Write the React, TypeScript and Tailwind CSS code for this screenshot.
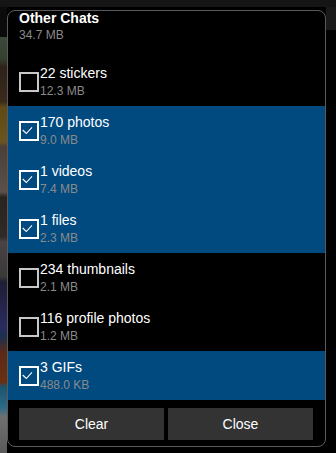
import { useState } from 'react'

type Item = { label: string; size: string; checked: boolean }

const initialItems: Item[] = [
  { label: '22 stickers', size: '12.3 MB', checked: false },
  { label: '170 photos', size: '9.0 MB', checked: true },
  { label: '1 videos', size: '7.4 MB', checked: true },
  { label: '1 files', size: '2.3 MB', checked: true },
  { label: '234 thumbnails', size: '2.1 MB', checked: false },
  { label: '116 profile photos', size: '1.2 MB', checked: false },
  { label: '3 GIFs', size: '488.0 KB', checked: true },
]

const CheckBox = ({ checked }: { checked: boolean }) => (
  <div
    className={`w-[20px] h-[20px] shrink-0 border-2 ${checked ? 'border-white' : 'border-[#c8c8c8]'}`}
  >
    {checked && (
      <svg width="16" height="16" viewBox="0 0 16 16" fill="none" aria-hidden="true">
        <polyline points="1.7,7 5.3,10.5 11,4.3" stroke="white" strokeWidth="1.1" />
      </svg>
    )}
  </div>
)

const App = () => {
  const [items, setItems] = useState(initialItems)

  const toggle = (i: number) =>
    setItems(prev => prev.map((it, idx) => (idx === i ? { ...it, checked: !it.checked } : it)))

  return (
    <div className="relative w-[336px] h-[453px] bg-black overflow-hidden font-['Liberation_Sans',Arial,sans-serif]">
      {/* app behind the popup */}
      <div className="h-[7px] bg-[#151515]" />
      <div className="flex h-[446px]">
        <div className="w-[7px] bg-[linear-gradient(to_bottom,#0b0b0b_0px,#0b0b0b_30px,#3c4a3c_30px,#34402f_52px,#2e2219_60px,#3a2a1c_95px,#5e4a16_100px,#6a5420_135px,#4a4038_140px,#5c5048_185px,#2a241f_190px,#302a28_230px,#4a4444_235px,#3a3838_270px,#1e1e34_275px,#2a2a60_320px,#1c3050_330px,#5a2a18_345px,#6a3010_375px,#1d5470_380px,#2a6a88_400px,#707070_410px,#5a5a5a_446px)]" />
        <div className="flex-1" />
        <div className="w-[10px]">
          <div className="h-[23px] bg-[#1a1a1a]" />
        </div>
      </div>

      {/* popup */}
      <div className="absolute left-[7px] top-[10px] w-[319px] h-[437px] rounded-lg border border-[#5a5a5a] bg-black overflow-hidden flex flex-col">
        <div className="h-[46px] px-[11px]">
          <div className="text-[14px] leading-[15px] font-bold text-white">Other Chats</div>
          <div className="mt-[1px] text-[12px] leading-[16px] text-[#8a8a8a]">34.7 MB</div>
        </div>

        {items.map((it, i) => (
          <div
            key={it.label}
            onClick={() => toggle(i)}
            className={`h-[49px] flex items-center pl-[11px] cursor-pointer ${it.checked ? 'bg-[#014a80]' : ''}`}
          >
            <CheckBox checked={it.checked} />
            <div className="pl-[1px]">
              <div className="text-[14px] leading-[19px] text-white">{it.label}</div>
              <div className="text-[12px] leading-[16px] text-[#8a8a8a]">{it.size}</div>
            </div>
          </div>
        ))}

        <div className="flex gap-[4px] pt-[8px] pl-[11px] pr-[12px]">
          <button className="flex-1 h-[32px] bg-[#333333] text-white text-[14px]">Clear</button>
          <button className="flex-1 h-[32px] bg-[#333333] text-white text-[14px]">Close</button>
        </div>
      </div>
    </div>
  )
}

export default App
